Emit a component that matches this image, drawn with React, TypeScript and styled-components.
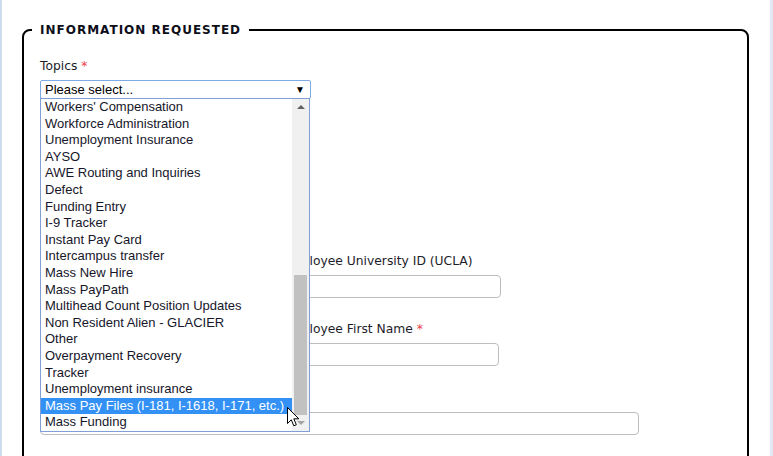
import styled, { createGlobalStyle } from "styled-components";

const topics = [
  "Workers' Compensation",
  "Workforce Administration",
  "Unemployment Insurance",
  "AYSO",
  "AWE Routing and Inquiries",
  "Defect",
  "Funding Entry",
  "I-9 Tracker",
  "Instant Pay Card",
  "Intercampus transfer",
  "Mass New Hire",
  "Mass PayPath",
  "Multihead Count Position Updates",
  "Non Resident Alien - GLACIER",
  "Other",
  "Overpayment Recovery",
  "Tracker",
  "Unemployment insurance",
  "Mass Pay Files (I-181, I-1618, I-171, etc.)",
  "Mass Funding",
];

const selectedTopic = "Mass Pay Files (I-181, I-1618, I-171, etc.)";

const App = () => {
  return (
    <>
      <GlobalStyle />
      <Page>
        <Fieldset>
          <Legend>Information Requested</Legend>

          {/* the open list covers the fields under Topics */}
          <Field gap={154}>
            <Label>Topics <Req>*</Req></Label>
            <SelectWrap>
              <SelectBox>
                <span>Please select...</span>
                <Caret>▼</Caret>
              </SelectBox>
              <DropList>
                <Options>
                  {topics.map((t) => (
                    <Option key={t} active={t === selectedTopic}>{t}</Option>
                  ))}
                </Options>
                <ScrollBar>
                  <ArrowUp />
                  <Thumb />
                  <ArrowDown />
                </ScrollBar>
              </DropList>
              <Cursor width="13" height="21" viewBox="0 0 13 21">
                <path d="M0.5 0.5 L0.5 16.5 L4.3 12.8 L6.8 18.8 L9.3 17.7 L6.8 11.8 L11.8 11.8 Z" fill="#fff" stroke="#000" strokeWidth="1" />
              </Cursor>
            </SelectWrap>
          </Field>

          <Row>
            <Field gap={23}>
              <Label>Employee University ID (UCLA)</Label>
              <TextInput width={219} />
            </Field>
          </Row>

          <Row>
            <Field gap={23}>
              <Label>Employee First Name <Req>*</Req></Label>
              <TextInput width={217} />
            </Field>
          </Row>

          <Field gap={22} offset={23}>
            <TextInput width={599} />
          </Field>
        </Fieldset>
      </Page>
    </>
  );
};

const GlobalStyle = createGlobalStyle`
  html, body {
    margin: 0;
    padding: 0;
    background: #fff;
  }
  body {
    font-family: "DejaVu Sans", Verdana, sans-serif;
    color: #1d1d2b;
  }
`;

const Page = styled.div`
  width: 773px;
  height: 456px;
  box-sizing: border-box;
  border-left: 2px solid #cddbee;
  border-right: 3px solid #e2e9f5;
  padding: 22px 21px 0 20px;
  overflow: hidden;
`;

const Fieldset = styled.fieldset`
  margin: 0;
  border: 2px solid #000;
  border-radius: 8px 8px 0 0;
  padding: 20px 16px 40px 16px;
  min-width: 0;
`;

const Legend = styled.legend`
  padding: 0 8px;
  margin-left: -8px;
  font-size: 12px;
  line-height: 16px;
  font-weight: bold;
  letter-spacing: 1px;
  text-transform: uppercase;
  color: #0e0e1a;
`;

const Field = styled.div<{ gap?: number; offset?: number }>`
  display: flex;
  flex-direction: column;
  align-items: flex-start;
  padding-top: ${(p) => p.offset ?? 0}px;
  margin-bottom: ${(p) => p.gap ?? 22}px;
`;

const Row = styled.div`
  display: grid;
  grid-template-columns: 220px 1fr;
  column-gap: 22px;

  & > * {
    grid-column: 2;
  }
`;

const Label = styled.div`
  font-size: 12.3px;
  line-height: 16px;
  margin-bottom: 6px;
  white-space: nowrap;
`;

const Req = styled.span`
  color: #e8404a;
`;

const SelectWrap = styled.div`
  position: relative;
  width: 271px;
`;

const SelectBox = styled.div`
  box-sizing: border-box;
  height: 19px;
  border: 1px solid #7eaae6;
  border-radius: 2px;
  display: flex;
  align-items: center;
  justify-content: space-between;
  padding: 0 5px 0 4px;
  font-family: "Liberation Sans", Arial, sans-serif;
  font-size: 13px;
  color: #000;
`;

const Caret = styled.span`
  font-size: 10px;
  line-height: 10px;
  color: #000;
`;

const DropList = styled.div`
  position: absolute;
  left: 0;
  top: 18px;
  width: 270px;
  box-sizing: border-box;
  border: 1px solid #7f9fd6;
  background: #fff;
  display: flex;
  z-index: 2;
`;

const Options = styled.div`
  flex: 1;
  display: flex;
  flex-direction: column;
`;

const Option = styled.div<{ active?: boolean }>`
  height: 16.6px;
  line-height: 16.6px;
  padding-left: 4px;
  font-family: "Liberation Sans", Arial, sans-serif;
  font-size: 13px;
  white-space: nowrap;
  color: ${(p) => (p.active ? "#fff" : "#16162a")};
  background: ${(p) => (p.active ? "#3391f5" : "transparent")};
`;

const ScrollBar = styled.div`
  width: 17px;
  background: #f0f0f0;
  display: flex;
  flex-direction: column;
  align-items: center;
`;

const ArrowUp = styled.div`
  margin-top: 6px;
  width: 0;
  height: 0;
  border-left: 4px solid transparent;
  border-right: 4px solid transparent;
  border-bottom: 4px solid #606060;
`;

const Thumb = styled.div`
  margin-top: 166px;
  width: 13px;
  height: 140px;
  background: #c1c1c1;
`;

const ArrowDown = styled.div`
  margin-top: 6px;
  width: 0;
  height: 0;
  border-left: 4px solid transparent;
  border-right: 4px solid transparent;
  border-top: 4px solid #a3a3a3;
`;

const Cursor = styled.svg`
  position: absolute;
  left: 247px;
  top: 327px;
  z-index: 3;
`;

const TextInput = styled.input<{ width: number }>`
  box-sizing: border-box;
  width: ${(p) => p.width}px;
  height: 23px;
  border: 1px solid #bdbdbd;
  border-radius: 4px;
  padding: 2px 6px;
  font-size: 12px;
`;

export default App;
